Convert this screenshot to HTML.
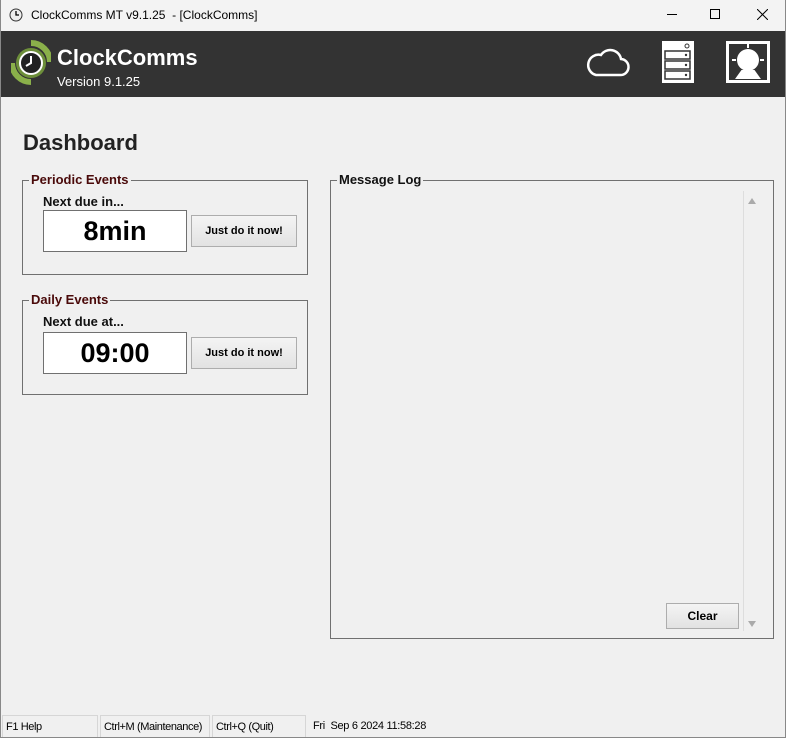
<!DOCTYPE html><html style="overflow:hidden;width:786px;height:738px"><head><style>
*{margin:0;padding:0;box-sizing:border-box}
body{width:786px;height:738px;background:#f0f0f0;font-family:"Liberation Sans",sans-serif;position:relative;overflow:hidden}
.a{position:absolute;white-space:nowrap}
.tb{left:0;top:0;width:786px;height:31px;background:#f3f3f3;font-size:12px;color:#000}
.hd{left:0;top:31px;width:786px;height:66px;background:#333}
.gb{border:1px solid #707070}
.leg{position:absolute;top:-9px;left:6px;background:#f0f0f0;padding:0 2px;font-size:13px;font-weight:bold;color:#4a0a0a}
.box{background:#fff;border:1px solid #707070;font-weight:bold;font-size:27px;text-align:center;line-height:40px}
.btn{background:linear-gradient(#f4f4f4,#e2e2e2);border:1px solid #adadad;font-size:11px;font-weight:bold;text-align:center}
.sb{font-size:11px;top:715px;height:22px;line-height:22px;padding-left:3px;border:1px solid #d6d6d6;border-bottom:none;letter-spacing:-0.4px;overflow:hidden}
</style></head><body>
<div class="a" style="left:0;top:0;width:786px;height:738px;border:1px solid #888;border-top:none;z-index:5;pointer-events:none"></div>
<div class="a tb">
<svg class="a" style="left:9px;top:8px" width="14" height="14" viewBox="0 0 14 14"><circle cx="7" cy="7" r="6" fill="#eee" stroke="#333"/><path d="M7 3V7H10" stroke="#000" fill="none" stroke-width="1.3"/></svg>
<span class="a" style="left:31px;top:8px">ClockComms MT v9.1.25&nbsp; - [ClockComms]</span>
<span class="a" style="left:667px;top:14px;width:10px;border-top:1px solid #000"></span>
<span class="a" style="left:710px;top:9px;width:10px;height:10px;border:1px solid #000"></span>
<svg class="a" style="left:757px;top:9px" width="11" height="11"><path d="M0 0L11 11M11 0L0 11" stroke="#000"/></svg>
</div>
<div class="a hd">
<svg class="a" style="left:11px;top:8px" width="40" height="48" viewBox="0 0 40 48"><path d="M20 4A19 19 0 0 1 39 23" stroke="#8ab04a" stroke-width="6" fill="none"/><path d="M20 43A19 19 0 0 1 1 24" stroke="#8ab04a" stroke-width="6" fill="none"/><circle cx="20" cy="24" r="15" fill="#6d8f3a"/><circle cx="20" cy="24" r="11" fill="#222" stroke="#fff" stroke-width="2"/><path d="M20 17V24L15 27" stroke="#fff" stroke-width="2" fill="none"/></svg>
<div class="a" style="left:57px;top:14px;color:#fff;font-size:22px;font-weight:bold">ClockComms</div>
<div class="a" style="left:57px;top:43px;color:#fff;font-size:13px">Version 9.1.25</div>
<svg class="a" style="left:586px;top:14px" width="44" height="34" viewBox="0 0 44 34"><path d="M10 30H34A8 8 0 0 0 35 14A11 11 0 0 0 15 10A9 9 0 0 0 10 30Z" fill="none" stroke="#fff" stroke-width="2.5"/></svg>
<svg class="a" style="left:662px;top:10px" width="32" height="42" viewBox="0 0 32 42"><rect width="32" height="42" fill="#fff"/><circle cx="25" cy="5" r="2" fill="none" stroke="#333"/><rect x="3" y="10" width="25" height="8" fill="none" stroke="#333" stroke-width="1.5"/><rect x="3" y="20" width="25" height="8" fill="none" stroke="#333" stroke-width="1.5"/><rect x="3" y="30" width="25" height="8" fill="none" stroke="#333" stroke-width="1.5"/><circle cx="24" cy="14" r="1.2" fill="#333"/><circle cx="24" cy="24" r="1.2" fill="#333"/><circle cx="24" cy="34" r="1.2" fill="#333"/></svg>
<svg class="a" style="left:726px;top:10px" width="44" height="42" viewBox="0 0 44 42"><rect x="1.5" y="1.5" width="41" height="39" fill="none" stroke="#fff" stroke-width="3"/><circle cx="22" cy="19" r="11" fill="#fff"/><path d="M22 3V7M6 19H10M34 19H38M11 37L16 30H28L33 37Z" stroke="#fff" stroke-width="2" fill="#fff"/></svg>
</div>
<div class="a" style="left:23px;top:130px;font-size:22px;font-weight:bold;color:#222">Dashboard</div>
<div class="a gb" style="left:22px;top:180px;width:286px;height:95px"><span class="leg">Periodic Events</span>
<div class="a" style="left:20px;top:13px;font-size:13px;font-weight:bold;color:#111">Next due in...</div>
<div class="a box" style="left:20px;top:29px;width:144px;height:42px">8min</div>
<div class="a btn" style="left:168px;top:34px;width:106px;height:32px;line-height:30px">Just do it now!</div></div>
<div class="a gb" style="left:22px;top:300px;width:286px;height:95px"><span class="leg">Daily Events</span>
<div class="a" style="left:20px;top:13px;font-size:13px;font-weight:bold;color:#111">Next due at...</div>
<div class="a box" style="left:20px;top:31px;width:144px;height:42px">09:00</div>
<div class="a btn" style="left:168px;top:36px;width:106px;height:32px;line-height:30px">Just do it now!</div></div>
<div class="a gb" style="left:330px;top:180px;width:444px;height:459px"><span class="leg" style="color:#111">Message Log</span>
<div class="a" style="left:412px;top:10px;width:1px;height:440px;background:#ddd"></div>
<div class="a" style="left:417px;top:17px;width:0;height:0;border:4px solid transparent;border-bottom:6px solid #aaa;border-top:none"></div>
<div class="a" style="left:417px;top:440px;width:0;height:0;border:4px solid transparent;border-top:6px solid #aaa;border-bottom:none"></div>
<div class="a btn" style="left:335px;top:422px;width:73px;height:26px;line-height:24px;font-size:12px">Clear</div></div>
<div class="a sb" style="left:2px;width:96px">F1 Help</div>
<div class="a sb" style="left:100px;width:110px">Ctrl+M (Maintenance)</div>
<div class="a sb" style="left:212px;width:94px">Ctrl+Q (Quit)</div>
<div class="a" style="left:313px;top:715px;font-size:11px;line-height:22px;letter-spacing:-0.3px">Fri&nbsp; Sep 6 2024 11:58:28</div>
</body></html>
